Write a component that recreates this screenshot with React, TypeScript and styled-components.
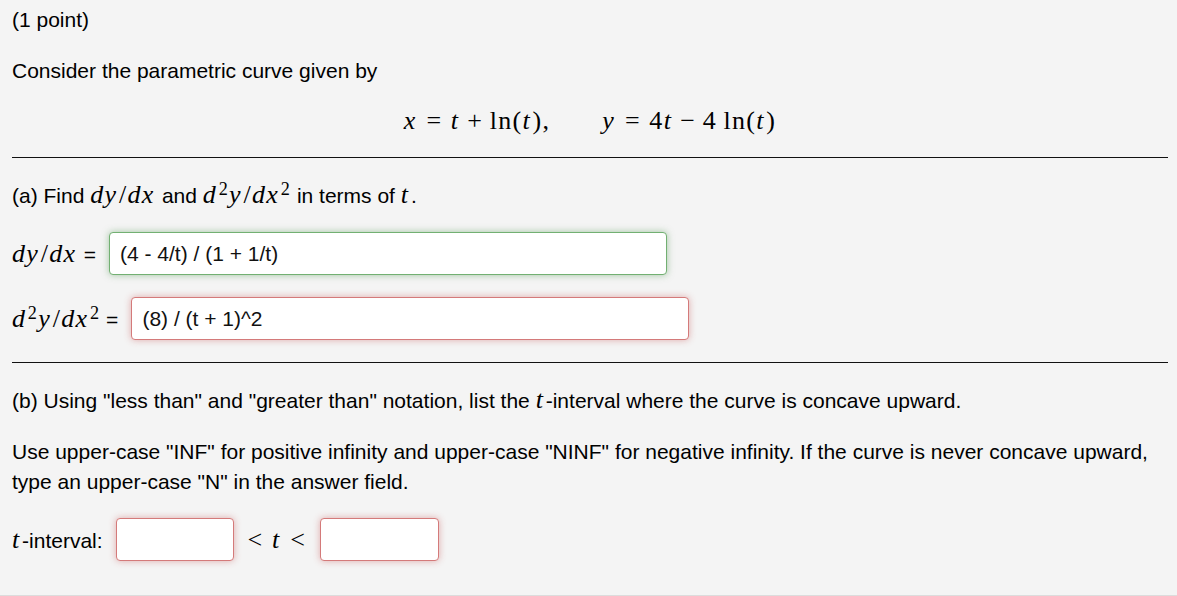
import React from "react";
import styled, { createGlobalStyle, css } from "styled-components";

const Global = createGlobalStyle`
  body {
    margin: 0;
    background: #f4f4f4;
    font-family: "Liberation Sans", Arial, sans-serif;
    font-size: 21px;
    color: #000;
  }
`;

const Page = styled.div`
  padding: 5px 9px 34px 12px;
  border-bottom: 2px solid #dcdcdc;
`;

const P = styled.p`
  margin: 0 0 21px;
  line-height: 30px;
`;

const Display = styled.div`
  text-align: center;
  line-height: 30px;
`;

const Rule = styled.hr`
  border: 0;
  height: 1px;
  background: #111;
  margin: 20px 0 23px;
`;

const M = styled.span`
  font-family: "Liberation Serif", "Times New Roman", serif;
  font-size: 26px;
  line-height: 1;
  letter-spacing: 0.05em;
  white-space: nowrap;
`;

const I = styled.i`
  font-style: italic;
  padding-right: 0.06em;
`;

const Rel = styled.span`
  margin: 0 0.32em;
`;

const Bin = styled.span`
  margin: 0 0.25em;
`;

const Sup = styled.sup`
  font-size: 0.7em;
  vertical-align: 0.42em;
  line-height: 0;
`;

const Quad = styled.span`
  display: inline-block;
  width: 2em;
`;

const Row = styled.div<{ $last?: boolean }>`
  display: flex;
  align-items: center;
  margin-bottom: ${(p) => (p.$last ? 0 : 22)}px;
`;

const Label = styled.span`
  margin-right: 13px;
`;

const Between = styled.span`
  margin: 0 14px;
`;

type Status = "correct" | "incorrect";

const Answer = styled.input<{ $status: Status; $w: number }>`
  box-sizing: border-box;
  width: ${(p) => p.$w}px;
  height: 43px;
  padding: 0 10px;
  font: inherit;
  color: #111;
  background: #fff;
  border-radius: 4px;
  outline: none;
  ${(p) =>
    p.$status === "correct"
      ? css`
          border: 1px solid #72b072;
          box-shadow: 0 0 7px rgba(80, 150, 80, 0.5);
        `
      : css`
          border: 1px solid #d47a7a;
          box-shadow: 0 0 7px rgba(200, 80, 80, 0.45);
        `}
`;

const DyDx = () => (
  <M>
    <I>dy</I>/<I>dx</I>
  </M>
);

const D2yDx2 = () => (
  <M>
    <I>d</I>
    <Sup>2</Sup>
    <I>y</I>/<I>dx</I>
    <Sup>2</Sup>
  </M>
);

export default function App() {
  return (
    <>
      <Global />
      <Page>
        <P>(1 point)</P>
        <P>Consider the parametric curve given by</P>
        <Display>
          <M>
            <I>x</I>
            <Rel>=</Rel>
            <I>t</I>
            <Bin>+</Bin>ln(<I>t</I>),
            <Quad />
            <I>y</I>
            <Rel>=</Rel>4<I>t</I>
            <Bin>−</Bin>4&thinsp;ln(<I>t</I>)
          </M>
        </Display>
        <Rule />
        <P>
          (a) Find <DyDx /> and <D2yDx2 /> in terms of{" "}
          <M>
            <I>t</I>
          </M>
          .
        </P>
        <Row>
          <Label>
            <DyDx /> =
          </Label>
          <Answer $status="correct" $w={558} defaultValue="(4 - 4/t) / (1 + 1/t)" />
        </Row>
        <Row>
          <Label>
            <D2yDx2 /> =
          </Label>
          <Answer $status="incorrect" $w={558} defaultValue="(8) / (t + 1)^2" />
        </Row>
        <Rule />
        <P>
          (b) Using "less than" and "greater than" notation, list the{" "}
          <M>
            <I>t</I>
          </M>
          -interval where the curve is concave upward.
        </P>
        <P>
          Use upper-case "INF" for positive infinity and upper-case "NINF" for negative infinity. If
          the curve is never concave upward, type an upper-case "N" in the answer field.
        </P>
        <Row $last>
          <Label>
            <M>
              <I>t</I>
            </M>
            -interval:
          </Label>
          <Answer $status="incorrect" $w={118} />
          <Between>
            <M>
              &lt;
              <Rel>
                <I>t</I>
              </Rel>
              &lt;
            </M>
          </Between>
          <Answer $status="incorrect" $w={119} />
        </Row>
      </Page>
    </>
  );
}
